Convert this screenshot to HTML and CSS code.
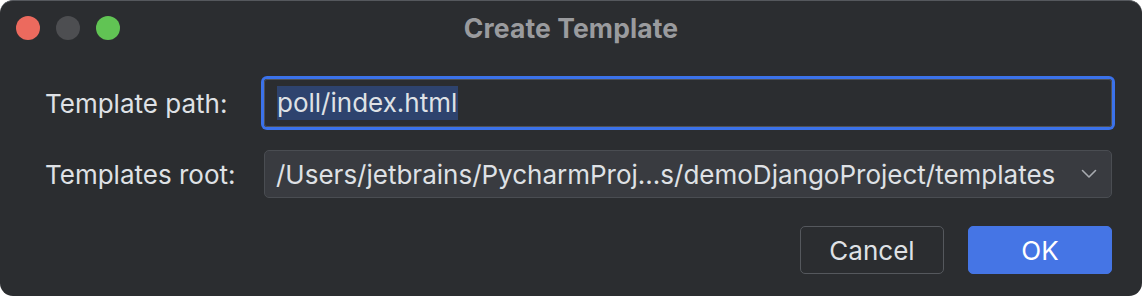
FILE: index.html
```html
<!DOCTYPE html>
<html>
<head>
<meta charset="utf-8">
<link rel="stylesheet" href="styles.css">
</head>
<body>
<div class="window">
  <div class="titlebar">
    <div class="lights">
      <span class="light red"></span>
      <span class="light gray"></span>
      <span class="light green"></span>
    </div>
    <div class="title">Create Template</div>
    <div></div>
  </div>
  <div class="form">
    <label class="label">Template path:</label>
    <div class="field focused"><span class="sel">poll/index.html</span></div>
    <label class="label">Templates root:</label>
    <div class="combo">
      <span class="combo-text">/Users/jetbrains/PycharmProj...s/demoDjangoProject/templates</span>
      <svg class="chev" width="16" height="10" viewBox="0 0 16 10"><path d="M1.5 1.5 L8 8 L14.5 1.5" fill="none" stroke="#A8ABB0" stroke-width="1.6" stroke-linecap="round" stroke-linejoin="round"/></svg>
    </div>
  </div>
  <div class="buttons">
    <button class="btn cancel">Cancel</button>
    <button class="btn ok">OK</button>
  </div>
</div>
</body>
</html>
```
FILE: styles.css
```css
html, body {
  margin: 0;
  padding: 0;
  background: #ffffff;
}
.window {
  width: 1142px;
  height: 296px;
  box-sizing: border-box;
  background: #2B2D30;
  border-radius: 13px;
  border-top: 1px solid #55585d;
  font-family: Inter, "Open Sans", sans-serif;
  color: #DFE1E5;
  overflow: hidden;
}
.titlebar {
  display: grid;
  grid-template-columns: 1fr auto 1fr;
  align-items: center;
  height: 53px;
}
.lights {
  display: flex;
  gap: 16px;
  padding-left: 16px;
}
.light {
  width: 24px;
  height: 24px;
  border-radius: 50%;
  display: block;
}
.red { background: #EC6A5E; }
.gray { background: #4D4E51; }
.green { background: #61C454; }
.title {
  font-weight: 700;
  font-size: 26.5px;
  color: #9A9B9E;
  letter-spacing: 0.1px;
}
.form {
  display: grid;
  grid-template-columns: 219px 1fr;
  row-gap: 23px;
  align-items: center;
  padding: 25px 30px 0 45px;
}
.label {
  font-size: 26px;
}
.field {
  height: 48px;
  box-sizing: border-box;
  border: 1px solid #4E5157;
  border-radius: 3px;
  display: flex;
  align-items: center;
  padding-left: 12px;
  font-size: 26px;
}
.field.focused {
  box-shadow: 0 0 0 3px #3B72EA;
}
.sel {
  background: #2E436E;
  line-height: 34px;
  padding-right: 1px;
}
.combo {
  height: 48px;
  box-sizing: border-box;
  background: #393B40;
  border: 1px solid #4A4D52;
  border-radius: 5px;
  display: flex;
  align-items: center;
  justify-content: space-between;
  padding: 0 14px 0 11px;
  font-size: 26px;
}
.buttons {
  display: flex;
  justify-content: flex-end;
  gap: 24px;
  padding: 28px 30px 0 0;
}
.btn {
  width: 144px;
  height: 48px;
  border-radius: 5px;
  font-family: Inter, "Open Sans", sans-serif;
  font-size: 26px;
  color: #DFE1E5;
  background: transparent;
  border: 1px solid #55585D;
}
.btn.ok {
  background: #4575E5;
  border-color: #4575E5;
  color: #ffffff;
}
```
